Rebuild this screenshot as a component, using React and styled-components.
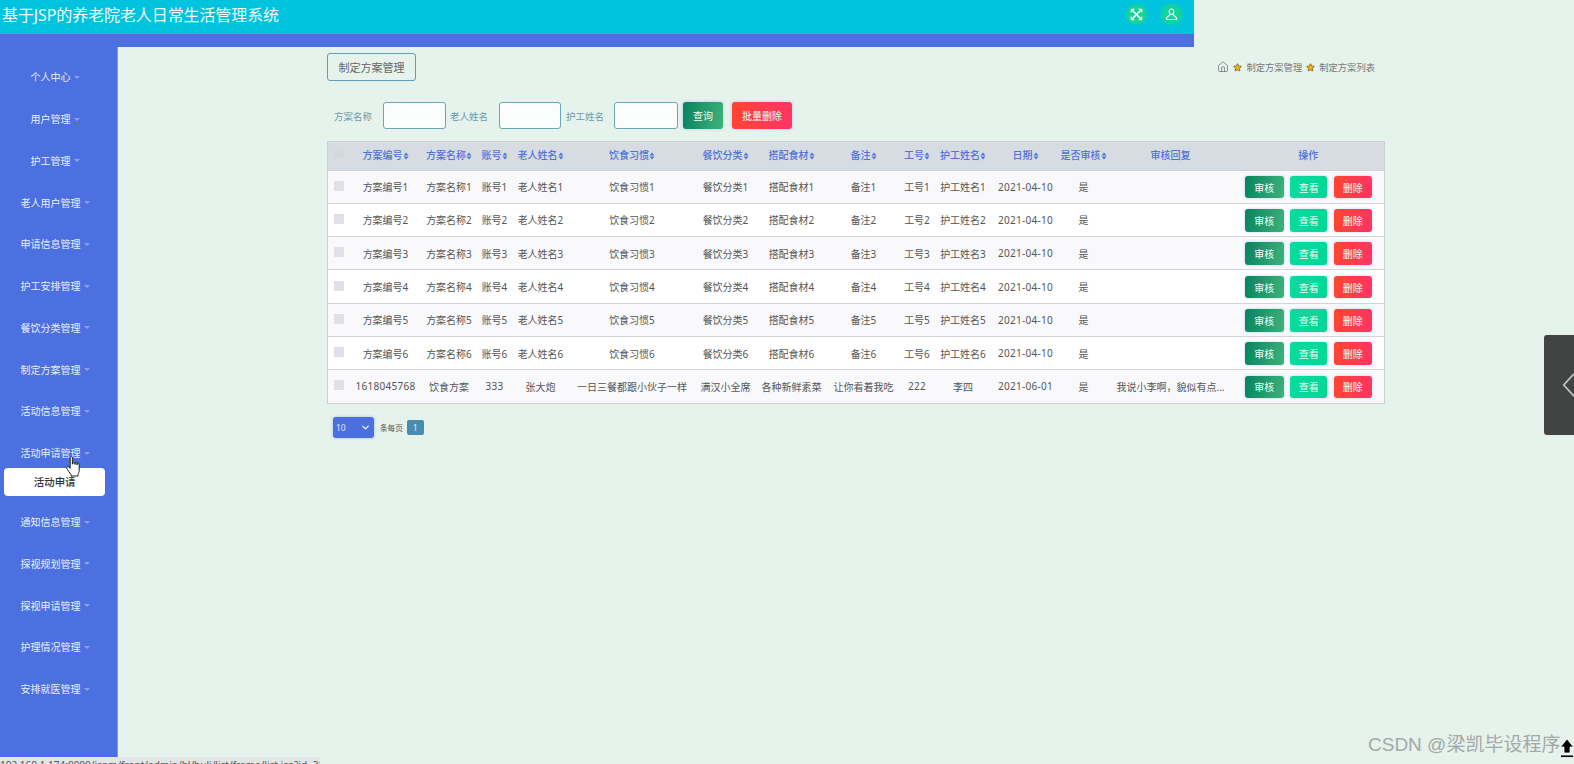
import React from 'react';
import styled, { createGlobalStyle } from 'styled-components';
import { ChevronDown, House, Star } from 'lucide-react';

const GlobalStyle = createGlobalStyle`
  html, body {
    margin: 0;
    padding: 0;
    height: 100%;
    overflow: hidden;
    background: #e6f2ec;
  }
  * {
    box-sizing: border-box;
  }
  body {
    font-family: "Noto Sans", "Noto Sans CJK SC", sans-serif;
  }
`;

const Page = styled.div`
  position: relative;
  width: 1574px;
  height: 764px;
  overflow: hidden;
  background: #e6f2ec;
`;

const Header = styled.header`
  width: 1194px;
`;

const TopBar = styled.div`
  height: 34px;
  background: #00c4dd;
  display: flex;
  align-items: center;
  justify-content: space-between;
  padding: 0 12px 5px 2px;
`;

const Title = styled.h1`
  margin: 0;
  font-size: 16px;
  font-weight: 400;
  line-height: 30px;
  color: #f4fdff;
  white-space: nowrap;
  letter-spacing: -0.1px;
`;

const HeaderIcons = styled.div`
  display: flex;
  gap: 14px;
`;

const RoundIcon = styled.span`
  width: 21px;
  height: 21px;
  border-radius: 50%;
  background: #0fd59a;
  display: flex;
  align-items: center;
  justify-content: center;
  color: #fff;
`;

const Strip = styled.div`
  height: 13px;
  background: #4d70e0;
`;

const Body = styled.div`
  display: flex;
  align-items: flex-start;
`;

const Sidebar = styled.nav`
  width: 118px;
  height: 711px;
  flex: none;
  padding-top: 9px;
  background: #4d70e0;
  border-right: 1px solid #7f98e8;
`;

const MenuItem = styled.div`
  height: 41.75px;
  display: flex;
  align-items: center;
  justify-content: center;
  gap: 3px;
  padding-right: 7px;
  font-size: 10px;
  color: #e9efff;
  white-space: nowrap;
`;

const Caret = styled.i`
  width: 0;
  height: 0;
  margin-top: 1px;
  border-left: 3px solid transparent;
  border-right: 3px solid transparent;
  border-top: 3px solid #8ba0e6;
`;

const SubItem = styled.div`
  height: 28.25px;
  width: 100.7px;
  margin: -5.8px 0 4.8px 4.3px;
  border-radius: 4px;
  background: #fff;
  display: flex;
  align-items: center;
  justify-content: center;
  font-size: 10.4px;
  font-weight: 500;
  color: #333;
`;

const Main = styled.main`
  width: 1057px;
  margin-left: 209px;
  padding-top: 6px;
`;

const TitleRow = styled.div`
  display: flex;
  align-items: flex-start;
  justify-content: space-between;
`;

const SectionButton = styled.div`
  width: 89px;
  height: 27.5px;
  border: 1px solid #5f9eb4;
  border-radius: 3px;
  display: flex;
  align-items: center;
  justify-content: center;
  font-size: 11px;
  color: #666;
`;

const Breadcrumb = styled.div`
  display: flex;
  align-items: center;
  gap: 4px;
  margin: 7px 9px 0 0;
  font-size: 9.3px;
  color: #777;
  white-space: nowrap;
`;

const SearchRow = styled.div`
  display: flex;
  align-items: center;
  height: 27px;
  margin-top: 21.5px;
`;

const SearchLabel = styled.label`
  width: ${(p) => p.$w}px;
  padding-left: ${(p) => p.$pad}px;
  font-size: 9.5px;
  color: #6d9aa8;
  white-space: nowrap;
`;

const SearchInput = styled.input`
  width: ${(p) => p.$w}px;
  height: 27px;
  padding: 0 6px;
  border: 1px solid #6aa5b8;
  border-radius: 3px;
  background: #fbfdfc;
  outline: none;
`;

const ActionButton = styled.button`
  width: ${(p) => p.$w}px;
  height: ${(p) => p.$h}px;
  margin: 0 0 0 ${(p) => p.$gap || 0}px;
  padding: 0;
  border: none;
  border-radius: 3px;
  font-family: inherit;
  font-size: 10px;
  font-weight: 400;
  color: #e8fff6;
  background: ${(p) =>
    p.$kind === 'green'
      ? 'linear-gradient(100deg, #07835f, #3fb27a)'
      : p.$kind === 'mint'
      ? 'linear-gradient(100deg, #0adb9f, #00d795)'
      : 'linear-gradient(100deg, #ff4630, #ff3366)'};
  box-shadow: 0 0 3px rgba(90, 150, 240, 0.45);
`;

const Table = styled.table`
  width: 1057px;
  margin-top: 11.5px;
  table-layout: fixed;
  border-collapse: collapse;
  border: 1px solid #ccd0d2;
`;

const HeadRow = styled.tr`
  height: 29px;
  background: #d6dce1;
`;

const Th = styled.th`
  padding: 0 0 3px;
  font-size: 10px;
  font-weight: 500;
  color: #4f72dc;
  text-align: center;
  white-space: nowrap;
`;

const Row = styled.tr`
  height: 33.3px;
  background: ${(p) => (p.$odd ? '#f9f9fb' : '#fff')};
  border-top: 1px solid #d2d5d7;
`;

const Td = styled.td`
  padding: 0;
  font-size: 10px;
  letter-spacing: ${(p) => (p.$num ? '0.3px' : '0')};
  color: #555;
  text-align: center;
  white-space: nowrap;
  overflow: hidden;
`;

const Check = styled.span`
  display: block;
  width: 10px;
  height: 10px;
  margin: -2px 0 0 6px;
  background: ${(p) => (p.$head ? '#d3d9de' : '#dfe1e6')};
`;

const RowActions = styled.div`
  display: flex;
  justify-content: center;
  gap: 6.5px;
  margin-top: 1px;
`;

const Pagination = styled.div`
  display: flex;
  align-items: center;
  margin: 13px 0 0 6px;
`;

const PageSize = styled.div`
  width: 41px;
  height: 21px;
  padding: 0 3px;
  border-radius: 3px;
  background: #4c6fe0;
  box-shadow: 0 0 3px rgba(90, 130, 240, 0.5);
  display: flex;
  align-items: center;
  justify-content: space-between;
  font-size: 8.5px;
  color: #dfe7ff;
`;

const PerPage = styled.span`
  margin: 0 4px 0 6px;
  font-size: 7.6px;
  color: #555;
`;

const PageNumber = styled.span`
  width: 17px;
  height: 15px;
  border-radius: 2px;
  background: #4a8cb1;
  display: flex;
  align-items: center;
  justify-content: center;
  font-size: 8px;
  color: #e6f4fa;
`;

const SideHandle = styled.div`
  position: absolute;
  top: 335px;
  left: 1544px;
  width: 30px;
  height: 100px;
  border-radius: 3px 0 0 3px;
  background: #414443;
  display: flex;
  align-items: center;
  padding-left: 18px;
`;

const StatusBar = styled.div`
  position: absolute;
  left: 0;
  top: 757px;
  width: 320px;
  height: 7px;
  padding-top: 3px;
  overflow: hidden;
  border-top-right-radius: 3px;
  background: #e2e6e5;
  font-size: 10px;
  line-height: 11px;
  color: #555;
  white-space: nowrap;
`;

const Watermark = styled.div`
  position: absolute;
  left: 1368px;
  top: 733px;
  font-family: "Liberation Sans", "Noto Sans CJK SC", sans-serif;
  font-size: 19px;
  line-height: 24px;
  color: #a3a9a7;
  white-space: nowrap;
`;

const UploadMark = styled.svg`
  position: absolute;
  left: 1560px;
  top: 737px;
`;

const HandCursor = styled.svg`
  position: absolute;
  left: 66px;
  top: 456px;
`;

const menu = [
  '个人中心', '用户管理', '护工管理', '老人用户管理', '申请信息管理',
  '护工安排管理', '餐饮分类管理', '制定方案管理', '活动信息管理', '活动申请管理',
  '通知信息管理', '探视规划管理', '探视申请管理', '护理情况管理', '安排就医管理',
];

const columns = [
  { label: '方案编号', w: 70, sort: true },
  { label: '方案名称', w: 57, sort: true },
  { label: '账号', w: 34, sort: true },
  { label: '老人姓名', w: 58, sort: true },
  { label: '饮食习惯', w: 125, sort: true },
  { label: '餐饮分类', w: 62, sort: true },
  { label: '搭配食材', w: 70, sort: true },
  { label: '备注', w: 74, sort: true },
  { label: '工号', w: 33, sort: true },
  { label: '护工姓名', w: 59, sort: true },
  { label: '日期', w: 66, sort: true },
  { label: '是否审核', w: 50, sort: true },
  { label: '审核回复', w: 124 },
  { label: '操作', w: 152 },
];

const rows = [1, 2, 3, 4, 5, 6].map((n) => [
  `方案编号${n}`, `方案名称${n}`, `账号${n}`, `老人姓名${n}`, `饮食习惯${n}`, `餐饮分类${n}`,
  `搭配食材${n}`, `备注${n}`, `工号${n}`, `护工姓名${n}`, '2021-04-10', '是', '',
]);

rows.push([
  '1618045768', '饮食方案', '333', '张大炮', '一日三餐都跟小伙子一样', '满汉小全席',
  '各种新鲜素菜', '让你看着我吃', '222', '李四', '2021-06-01', '是', '我说小李啊，貌似有点...',
]);

function SortIcon() {
  return (
    <svg width="6" height="8" viewBox="0 0 6 8" style={{ verticalAlign: -1 }}>
      <path d="M3 0.5 L5.5 3.4 H0.5 Z M3 7.5 L0.5 4.6 H5.5 Z" fill="#4f72dc" />
    </svg>
  );
}

function FullscreenIcon() {
  return (
    <svg width="13" height="13" viewBox="0 0 13 13" fill="#fff" stroke="#fff" strokeWidth="1.6">
      <path d="M3 3l7 7M10 3l-7 7" />
      <path d="M1 1h3.4L1 4.4zM12 1H8.6L12 4.4zM1 12h3.4L1 8.6zM12 12H8.6L12 8.6z" strokeWidth="0.6" />
    </svg>
  );
}

function UserIcon() {
  return (
    <svg width="13" height="13" viewBox="0 0 13 13" fill="none" stroke="#fff" strokeWidth="1.1">
      <ellipse cx="6.5" cy="3.8" rx="2.3" ry="2.7" />
      <path d="M5 6.2 C5 8 2.2 8.2 1.5 9.8 V11.5 H11.5 V9.8 C10.8 8.2 8 8 8 6.2" />
    </svg>
  );
}

function CrumbStar() {
  return <Star size={9} fill="#efb21f" stroke="#6a5a20" strokeWidth={2} />;
}

export default function App() {
  return (
    <Page>
      <GlobalStyle />
      <Header>
        <TopBar>
          <Title>基于JSP的养老院老人日常生活管理系统</Title>
          <HeaderIcons>
            <RoundIcon><FullscreenIcon /></RoundIcon>
            <RoundIcon><UserIcon /></RoundIcon>
          </HeaderIcons>
        </TopBar>
        <Strip />
      </Header>
      <Body>
        <Sidebar>
          {menu.map((name) => (
            <React.Fragment key={name}>
              <MenuItem>
                {name}
                <Caret />
              </MenuItem>
              {name === '活动申请管理' && <SubItem>活动申请</SubItem>}
            </React.Fragment>
          ))}
        </Sidebar>
        <Main>
          <TitleRow>
            <SectionButton>制定方案管理</SectionButton>
            <Breadcrumb>
              <House size={12} color="#666" strokeWidth={1.4} />
              <CrumbStar />
              <span>制定方案管理</span>
              <CrumbStar />
              <span>制定方案列表</span>
            </Breadcrumb>
          </TitleRow>
          <SearchRow>
            <SearchLabel $w={56} $pad={7}>方案名称</SearchLabel>
            <SearchInput $w={63} />
            <SearchLabel $w={53} $pad={4}>老人姓名</SearchLabel>
            <SearchInput $w={62} />
            <SearchLabel $w={53} $pad={5}>护工姓名</SearchLabel>
            <SearchInput $w={64} />
            <ActionButton $kind="green" $w={40} $h={27} $gap={5}>查询</ActionButton>
            <ActionButton $kind="red" $w={60} $h={27} $gap={9}>批量删除</ActionButton>
          </SearchRow>
          <Table>
            <colgroup>
              <col width="23" />
              {columns.map((c) => <col key={c.label} width={c.w} />)}
            </colgroup>
            <thead>
              <HeadRow>
                <Th><Check $head /></Th>
                {columns.map((c) => (
                  <Th key={c.label}>
                    {c.label}
                    {c.sort && <SortIcon />}
                  </Th>
                ))}
              </HeadRow>
            </thead>
            <tbody>
              {rows.map((cells, i) => (
                <Row key={cells[0]} $odd={i % 2 === 0}>
                  <Td><Check /></Td>
                  {cells.map((text, j) => (
                    <Td key={j} $num={/^[\d-]+$/.test(text)}>{text}</Td>
                  ))}
                  <Td>
                    <RowActions>
                      <ActionButton $kind="green" $w={39} $h={22.5}>审核</ActionButton>
                      <ActionButton $kind="mint" $w={37} $h={22.5}>查看</ActionButton>
                      <ActionButton $kind="red" $w={38} $h={22.5}>删除</ActionButton>
                    </RowActions>
                  </Td>
                </Row>
              ))}
            </tbody>
          </Table>
          <Pagination>
            <PageSize>
              10
              <ChevronDown size={11} strokeWidth={3} color="#eef3ff" />
            </PageSize>
            <PerPage>条每页</PerPage>
            <PageNumber>1</PageNumber>
          </Pagination>
        </Main>
      </Body>
      <SideHandle>
        <svg width="14" height="34" viewBox="0 0 14 34" fill="none" stroke="#c4c6c5" strokeWidth="2">
          <path d="M14 4 L2 17 L14 30" />
        </svg>
      </SideHandle>
      <StatusBar>192.168.1.174:8080/jspm/front/admin/hl/huli/list/frame/list.jsp?id=3&page=1</StatusBar>
      <Watermark>CSDN @梁凯毕设程序</Watermark>
      <UploadMark width="14" height="22" viewBox="0 0 14 22">
        <path d="M7 2 L13.5 10 H10 V16 H4 V10 H0.5 Z M0.5 18 H13.5 V20.5 H0.5 Z" fill="#000" stroke="#fff" strokeWidth="0.8" />
      </UploadMark>
      <HandCursor width="16" height="21" viewBox="0 0 16 21">
        <path
          d="M4.2 1.6 C4.2 .4 6.4 .4 6.4 1.6 V8 L7 8 V6.6 C7 5.6 9 5.6 9 6.6 V8.4 V7.2 C9 6.2 11 6.2 11 7.2 V9 V8 C11 7 13.2 7 13.2 8 V14 C13.2 16 12.6 17 12 18.5 V20 H5 V18.6 C3.6 16.6 1.6 14 .8 12.2 C.2 10.8 1.8 10 3 11 L4.2 12.4 Z"
          fill="#fff"
          stroke="#222"
          strokeWidth="1"
        />
      </HandCursor>
    </Page>
  );
}
